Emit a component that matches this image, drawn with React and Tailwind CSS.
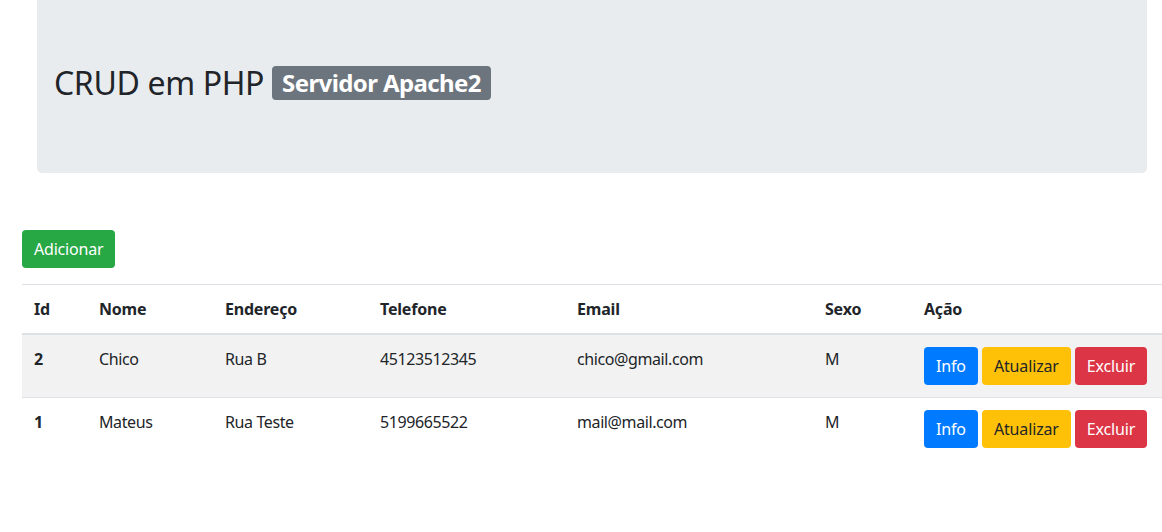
import React from "react";

const rows = [
  { id: 2, nome: "Chico", endereco: "Rua B", telefone: "45123512345", email: "chico@gmail.com", sexo: "M" },
  { id: 1, nome: "Mateus", endereco: "Rua Teste", telefone: "5199665522", email: "mail@mail.com", sexo: "M" },
];

const cols = [
  { label: "Id", w: "w-[65px]" },
  { label: "Nome", w: "w-[126px]" },
  { label: "Endereço", w: "w-[155px]" },
  { label: "Telefone", w: "w-[197px]" },
  { label: "Email", w: "w-[248px]" },
  { label: "Sexo", w: "w-[99px]" },
  { label: "Ação", w: "" },
];

const btn = "inline-block h-[38px] px-3 text-base leading-6 rounded-[4px] align-top tracking-[-0.15px]";

export default function App() {
  return (
    <div className="min-h-[532px] bg-white text-[#212529] font-['Noto_Sans',sans-serif] text-base">
      <div className="ml-[37px] w-[1110px] h-[173px] bg-[#e9ecef] rounded-b-[5px] pt-16 px-[17px]">
        <h2 className="text-[32px] leading-[38px] font-normal flex items-center tracking-[-0.35px]">
          CRUD em PHP
          <span className="ml-[8px] bg-[#6c757d] text-white text-[24px] font-bold leading-[24px] px-[10px] py-[5px] rounded-[4px] tracking-[-0.6px]">
            Servidor Apache2
          </span>
        </h2>
      </div>

      <div className="ml-[22px] mt-[57px]">
        <button className="h-[38px] px-3 bg-[#28a745] text-white rounded-[4px] text-base leading-6 tracking-[-0.2px]">
          Adicionar
        </button>
      </div>

      <table className="ml-[22px] mt-4 w-[1140px] border-collapse table-fixed">
        <thead>
          <tr className="border-t border-[#dee2e6] border-b-2">
            {cols.map((c) => (
              <th key={c.label} className={`${c.w} p-3 text-left font-bold leading-6 tracking-[-0.2px]`}>
                {c.label}
              </th>
            ))}
          </tr>
        </thead>
        <tbody className="tracking-[-0.4px]">
          {rows.map((r, i) => (
            <tr key={r.id} className={`border-t border-[#dee2e6] ${i % 2 === 0 ? "bg-[#f2f2f2]" : ""}`}>
              <td className="p-3 align-top leading-6 font-bold">{r.id}</td>
              <td className="p-3 align-top leading-6">{r.nome}</td>
              <td className="p-3 align-top leading-6">{r.endereco}</td>
              <td className="p-3 align-top leading-6">{r.telefone}</td>
              <td className="p-3 align-top leading-6">{r.email}</td>
              <td className="p-3 align-top leading-6">{r.sexo}</td>
              <td className="p-3 align-top leading-6 whitespace-nowrap">
                <div className="flex gap-1">
                  <button className={`${btn} bg-[#007bff] text-white`}>Info</button>
                  <button className={`${btn} bg-[#ffc107] text-[#212529]`}>Atualizar</button>
                  <button className={`${btn} bg-[#dc3545] text-white`}>Excluir</button>
                </div>
              </td>
            </tr>
          ))}
        </tbody>
      </table>
    </div>
  );
}
